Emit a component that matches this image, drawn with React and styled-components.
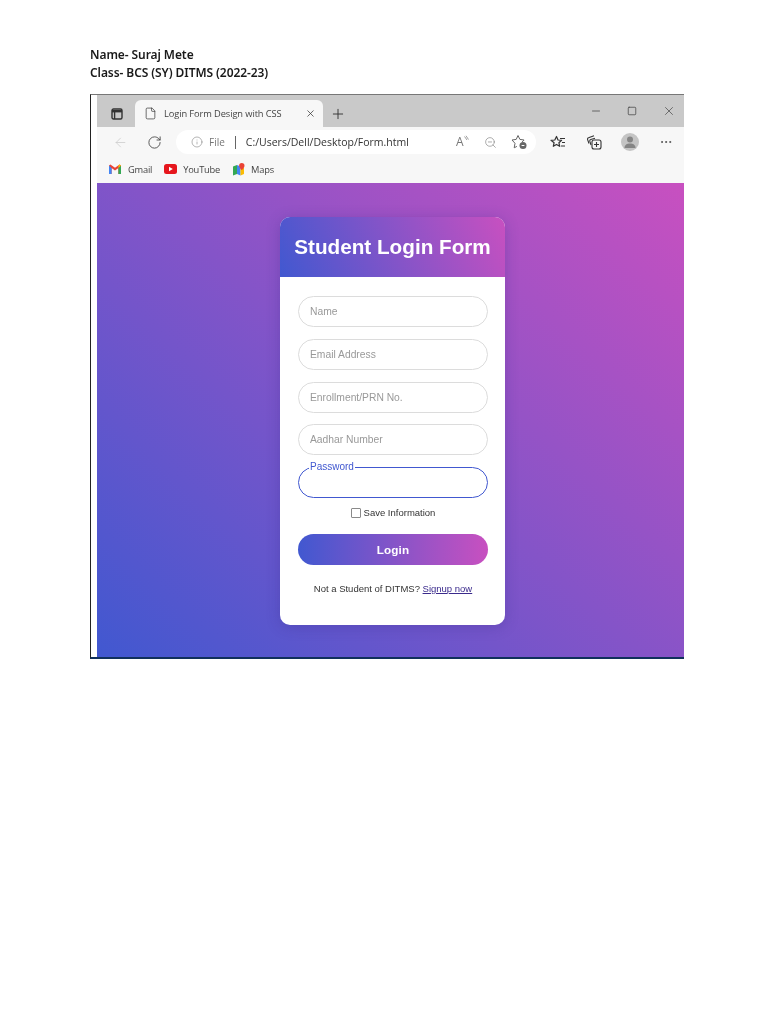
import React from 'react';
import styled, { createGlobalStyle } from 'styled-components';
import { ArrowLeft, RotateCw, Info, ZoomOut, Plus, X, Minus, Square, File, Ellipsis } from 'lucide-react';

const Global = createGlobalStyle`
  html, body { margin: 0; padding: 0; background: #fff; }
  body { width: 768px; height: 1024px; overflow: hidden; font-family: "Liberation Sans", Arial, sans-serif; }
`;
const Sheet = styled.div`
  padding: 46px 0 0 90px;
  height: 1024px;
  box-sizing: border-box;
`;
const DocLine = styled.div`
  font-family: "Noto Sans", "Open Sans", sans-serif;
  font-weight: 600;
  font-size: 12px;
  line-height: 18px;
  color: #1a1a1a;
  letter-spacing: -0.08px;
  filter: blur(0.3px);
`;
const Shot = styled.div`
  margin-top: 12px;
  width: 594px;
  height: 565px;
  box-sizing: border-box;
  border-top: 1px solid #777;
  border-left: 1px solid #222;
  border-bottom: 2px solid #10305c;
  padding-left: 6px;
  display: flex;
  flex-direction: column;
  filter: blur(0.4px);
`;
const TabBar = styled.div`
  height: 32px;
  flex: none;
  background: #c9c9c9;
  display: flex;
  align-items: flex-end;
  color: #333;
`;
const SideToggle = styled.div`
  width: 38px;
  height: 27px;
  flex: none;
  display: flex;
  align-items: center;
  justify-content: center;
  padding-left: 2px;
  box-sizing: border-box;
`;
const Tab = styled.div`
  width: 188px;
  height: 27px;
  flex: none;
  background: #f7f7f7;
  border-radius: 6px 6px 0 0;
  display: flex;
  align-items: center;
  padding: 0 7px 0 9px;
  box-sizing: border-box;
  gap: 7px;
`;
const TabTitle = styled.span`
  flex: 1;
  font-family: "Open Sans", sans-serif;
  font-size: 9.3px;
  letter-spacing: -0.1px;
  color: #444;
  white-space: nowrap;
`;
const NewTab = styled.div`
  width: 29px;
  height: 27px;
  display: flex;
  align-items: center;
  justify-content: center;
  color: #333;
`;
const WindowControls = styled.div`
  margin-left: auto;
  height: 32px;
  padding-right: 8px;
  display: flex;
  align-items: center;
  gap: 25px;
  color: #444;
`;
const Toolbar = styled.div`
  height: 28px;
  flex: none;
  box-sizing: border-box;
  padding: 2px 0 0 6px;
  background: #f7f7f7;
  display: flex;
  align-items: center;
  color: #444;
`;
const ToolSlot = styled.div`
  width: ${p => p.$w || 34}px;
  flex: none;
  display: flex;
  align-items: center;
  justify-content: center;
  color: ${p => p.$color || '#444'};
`;
const AddressPill = styled.div`
  width: 360px;
  height: 24px;
  flex: none;
  margin-left: 5px;
  margin-right: 4px;
  background: #fff;
  border-radius: 12px;
  display: flex;
  align-items: center;
  padding: 0 8px 0 15px;
  box-sizing: border-box;
`;
const FileLabel = styled.span`
  font-family: "Open Sans", sans-serif;
  font-size: 10px;
  color: #777;
  margin-left: 6px;
`;
const Pipe = styled.span`
  width: 1px;
  height: 13px;
  background: #666;
  margin: 0 10px 0 10px;
`;
const Url = styled.span`
  font-family: "Open Sans", sans-serif;
  font-size: 10.5px;
  color: #333;
  white-space: nowrap;
`;
const PillIcons = styled.div`
  margin-left: auto;
  display: flex;
  align-items: center;
  gap: 14px;
  color: #777;
`;
const ReadAloud = styled.span`
  display: flex;
  align-items: flex-start;
  font-family: "Open Sans", sans-serif;
  font-size: 12px;
  line-height: 14px;
  color: #777;
  width: 14px;
`;
const Avatar = styled.div`
  width: 18px;
  height: 18px;
  border-radius: 50%;
  background: #c4c4c4;
  display: flex;
  align-items: center;
  justify-content: center;
`;
const Bookmarks = styled.div`
  height: 28px;
  flex: none;
  background: #f7f7f7;
  display: flex;
  align-items: center;
  padding-left: 12px;
  gap: 12px;
`;
const Bookmark = styled.div`
  display: flex;
  align-items: center;
  gap: ${p => p.$gap || 6}px;
  font-family: "Open Sans", sans-serif;
  font-size: 9.3px;
  letter-spacing: -0.2px;
  color: #444;
`;
const Stage = styled.div`
  flex: 1;
  background: linear-gradient(43deg, #4158d0 0%, #c850c0 100%);
  display: flex;
  justify-content: center;
  align-items: flex-start;
  padding: 34px 0 0 0;
`;
const Card = styled.div`
  width: 225px;
  height: 408px;
  margin-left: 4px;
  background: #fff;
  border-radius: 10px;
  overflow: hidden;
  box-shadow: 0 2px 14px rgba(50, 40, 130, 0.28);
  display: flex;
  flex-direction: column;
`;
const CardHead = styled.div`
  height: 60px;
  flex: none;
  background: linear-gradient(65deg, #4158d0 0%, #c850c0 100%);
  display: flex;
  align-items: center;
  justify-content: center;
  color: #fff;
  font-size: 20.7px;
  font-weight: 700;
`;
const Form = styled.div`
  flex: 1;
  padding: 19px 17px 0 18px;
  display: flex;
  flex-direction: column;
`;
const Fields = styled.div`
  display: flex;
  flex-direction: column;
  gap: 11.75px;
`;
const Field = styled.div`
  position: relative;
  height: 31px;
  box-sizing: border-box;
  border-radius: 16px;
  border: 1px solid ${p => (p.$active ? '#4158d0' : '#dcdcdc')};
  display: flex;
  align-items: center;
  padding-left: 11px;
  font-size: 10.3px;
  color: #999;
`;
const FloatLabel = styled.span`
  position: absolute;
  left: 10px;
  top: -7px;
  background: #fff;
  padding: 0 1px;
  font-size: 10px;
  line-height: 12px;
  color: #4158d0;
`;
const SaveRow = styled.label`
  height: 29px;
  display: flex;
  align-items: center;
  justify-content: center;
  gap: 3px;
  font-size: 9.5px;
  color: #333;
`;
const Box = styled.span`
  width: 8px;
  height: 8px;
  border: 1px solid #8a8a8a;
  border-radius: 1px;
`;
const LoginBtn = styled.div`
  margin-top: 7px;
  height: 31px;
  flex: none;
  border-radius: 16px;
  background: linear-gradient(90deg, #4158d0 0%, #c850c0 100%);
  color: #fff;
  font-size: 11.7px;
  font-weight: 700;
  display: flex;
  align-items: center;
  justify-content: center;
  letter-spacing: 0.1px;
`;
const Signup = styled.div`
  margin-top: 17px;
  text-align: center;
  font-size: 9.5px;
  line-height: 14px;
  color: #333;
  a { color: #3a2a8c; text-decoration: underline; }
`;

const GmailIcon = () => (
  <svg width="12" height="10" viewBox="0 0 12 10">
    <path d="M0 1.5V10h2.6V4L6 6.6 9.4 4v6H12V1.5L10.6.4 6 3.8 1.4.4z" fill="#ea4335" />
    <path d="M0 1.5V10h2.6V4z" fill="#4285f4" />
    <path d="M12 1.5V10H9.4V4z" fill="#34a853" />
    <path d="M12 1.5 10.6.4 9.4 1.3V4z" fill="#fbbc04" />
  </svg>
);
const YouTubeIcon = () => (
  <svg width="13" height="10" viewBox="0 0 13 10">
    <rect width="13" height="10" rx="2.5" fill="#e6161d" />
    <path d="M5 2.8v4.4L8.8 5z" fill="#fff" />
  </svg>
);
const MapsIcon = () => (
  <svg width="13" height="13" viewBox="0 0 13 13">
    <path d="M1 3.5 5 2v9l-4 1.5z" fill="#34a853" />
    <path d="M5 2l3.5 1.5v9L5 11z" fill="#4285f4" />
    <path d="M8.5 6 12 4.5V11l-3.5 1.5z" fill="#fbbc04" />
    <path d="M9.8 0a2.7 2.7 0 0 0-2.7 2.7c0 2 2.7 4.3 2.7 4.3s2.7-2.3 2.7-4.3A2.7 2.7 0 0 0 9.8 0z" fill="#ea4335" />
  </svg>
);
const SideIcon = () => (
  <svg width="12" height="12" viewBox="0 0 12 12" fill="none" stroke="#333" strokeWidth="1.4">
    <rect x="1" y="1" width="10" height="10" rx="1.5" />
    <path d="M1 3.2h10" strokeWidth="2.4" />
    <path d="M3.6 3v8" />
  </svg>
);
const ReadAloudWaves = () => (
  <svg width="5" height="7" viewBox="0 0 5 7" fill="none" stroke="#888" strokeWidth="0.8">
    <path d="M0.5 1.5 3 5M2 0.8 4.5 4.5" />
  </svg>
);
const FavAddIcon = () => (
  <svg width="17" height="16" viewBox="0 0 17 16" fill="none" stroke="#666" strokeWidth="1" strokeLinejoin="round">
    <path d="M7 1.5 8.9 5.4l4.2.6-2 2M5.9 12.4l-2.7 1.4.8-4.5L1 6l4.2-.6L7 1.5" />
    <circle cx="12" cy="11.5" r="3.5" fill="#666" stroke="none" />
    <path d="M10.6 11.5h2.8" stroke="#fff" />
  </svg>
);
const FavoritesIcon = () => (
  <svg width="16" height="15" viewBox="0 0 16 15" fill="none" stroke="#333" strokeWidth="1.2" strokeLinejoin="round">
    <path d="M6.5 1.5 8 5l3.6.3-2.7 2.4.8 3.6-3.2-1.9-3.2 1.9.8-3.6L1 5.3 4.8 5z" />
    <path d="M10 3.5h5M12 7.5h3M11 11h4" />
  </svg>
);
const CollectionsIcon = () => (
  <svg width="16" height="16" viewBox="0 0 16 16" fill="none" stroke="#333" strokeWidth="1.1">
    <path d="M3 9.5 1.6 5.6a1.4 1.4 0 0 1 .9-1.8L8 1.8" />
    <path d="M5 11 3.8 7.2a1.4 1.4 0 0 1 1-1.7L9 4.3" />
    <rect x="6" y="6" width="9" height="9" rx="2" />
    <path d="M10.5 8v5M8 10.5h5" />
  </svg>
);
const PersonIcon = () => (
  <svg width="14" height="14" viewBox="0 0 14 14" fill="#858585">
    <circle cx="7" cy="4.6" r="3" />
    <path d="M1.5 13c0-3 2.5-4.4 5.5-4.4s5.5 1.4 5.5 4.4z" />
  </svg>
);

export default function App() {
  return (
    <>
      <Global />
      <Sheet>
        <DocLine>Name- Suraj Mete</DocLine>
        <DocLine>Class- BCS (SY) DITMS (2022-23)</DocLine>
        <Shot>
          <TabBar>
            <SideToggle><SideIcon /></SideToggle>
            <Tab>
              <File size={13} strokeWidth={1.3} color="#333" />
              <TabTitle>Login Form Design with CSS</TabTitle>
              <X size={11} strokeWidth={1.6} color="#333" />
            </Tab>
            <NewTab><Plus size={16} strokeWidth={1.4} /></NewTab>
            <WindowControls>
              <Minus size={12} strokeWidth={1.5} />
              <Square size={10} strokeWidth={1.8} />
              <X size={14} strokeWidth={1.2} />
            </WindowControls>
          </TabBar>
          <Toolbar>
            <ToolSlot $color="#c9c9c9"><ArrowLeft size={15} strokeWidth={1.2} /></ToolSlot>
            <ToolSlot><RotateCw size={15} strokeWidth={1.4} /></ToolSlot>
            <AddressPill>
              <Info size={12} strokeWidth={1.1} color="#777" />
              <FileLabel>File</FileLabel>
              <Pipe />
              <Url>C:/Users/Dell/Desktop/Form.html</Url>
              <PillIcons>
                <ReadAloud>A<ReadAloudWaves /></ReadAloud>
                <ZoomOut size={13} strokeWidth={1.1} />
                <FavAddIcon />
              </PillIcons>
            </AddressPill>
            <ToolSlot $w={36}><FavoritesIcon /></ToolSlot>
            <ToolSlot $w={36}><CollectionsIcon /></ToolSlot>
            <ToolSlot $w={36}><Avatar><PersonIcon /></Avatar></ToolSlot>
            <ToolSlot $w={36}><Ellipsis size={14} strokeWidth={1.4} /></ToolSlot>
          </Toolbar>
          <Bookmarks>
            <Bookmark $gap={7}><GmailIcon />Gmail</Bookmark>
            <Bookmark><YouTubeIcon />YouTube</Bookmark>
            <Bookmark><MapsIcon />Maps</Bookmark>
          </Bookmarks>
          <Stage>
            <Card>
              <CardHead>Student Login Form</CardHead>
              <Form>
                <Fields>
                  <Field>Name</Field>
                  <Field>Email Address</Field>
                  <Field>Enrollment/PRN No.</Field>
                  <Field>Aadhar Number</Field>
                  <Field $active><FloatLabel>Password</FloatLabel></Field>
                </Fields>
                <SaveRow><Box />Save Information</SaveRow>
                <LoginBtn>Login</LoginBtn>
                <Signup>Not a Student of DITMS? <a href="#signup">Signup now</a></Signup>
              </Form>
            </Card>
          </Stage>
        </Shot>
      </Sheet>
    </>
  );
}
